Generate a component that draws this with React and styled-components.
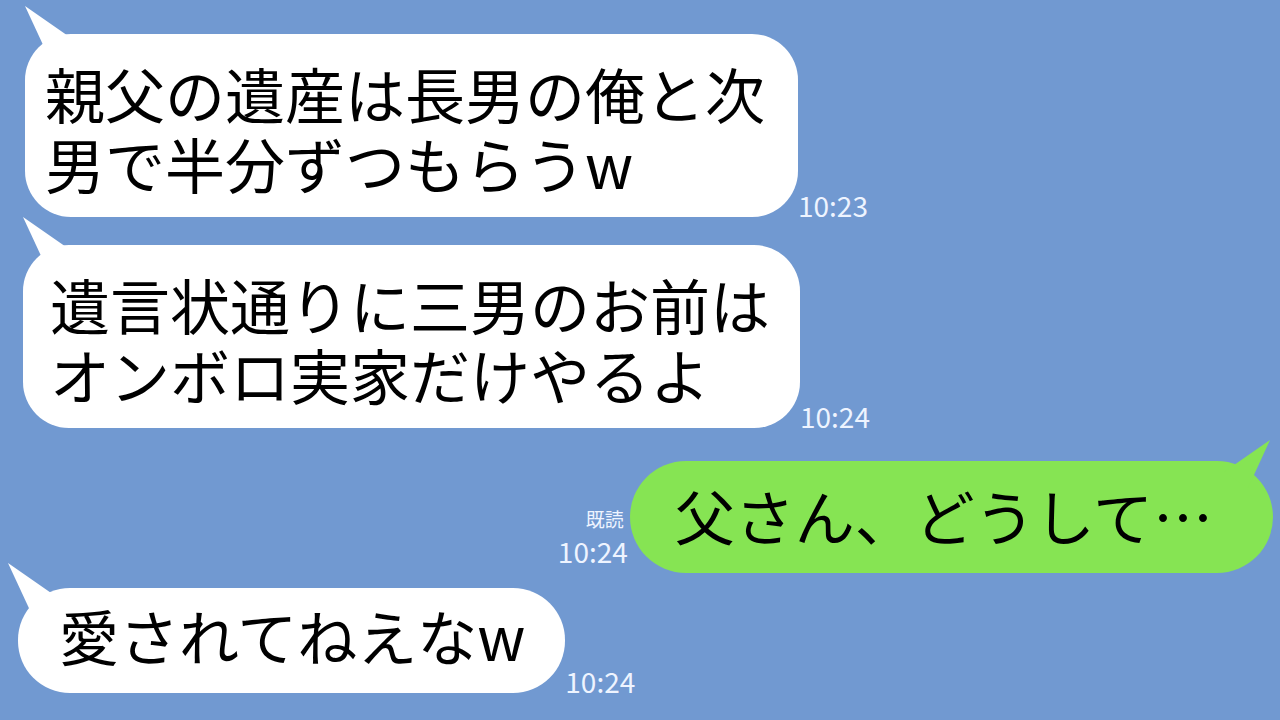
import styled, { createGlobalStyle, css } from "styled-components";

const GlobalStyle = createGlobalStyle`
  html, body {
    margin: 0;
    padding: 0;
    background: #7199d1;
  }
  * {
    box-sizing: border-box;
  }
`

const Screen = styled.div`
  width: 1280px;
  height: 720px;
  overflow: hidden;
  background: #7199d1;
  padding-top: 34px;
  display: flex;
  flex-direction: column;
  font-family: "Noto Sans CJK JP", "Noto Sans", sans-serif;
`

const Row = styled.div`
  display: flex;
  align-items: flex-end;
  margin-top: ${(p) => p.$top || 0}px;
  padding-left: ${(p) => p.$left || 0}px;
  justify-content: ${(p) => (p.$mine ? "flex-end" : "flex-start")};
  padding-right: ${(p) => (p.$mine ? 7 : 0)}px;
`

const Bubble = styled.div`
  position: relative;
  background: ${(p) => (p.$mine ? "#86e453" : "#ffffff")};
  color: #000;
  font-size: 60px;
  line-height: 70px;
  white-space: nowrap;
  border-radius: ${(p) => p.$radius || 46}px;
  padding: ${(p) => p.$pad};

  &::before {
    content: "";
    position: absolute;
    background: inherit;
    ${(p) =>
      p.$mine
        ? css`
            right: 3px;
            top: -21px;
            width: 46px;
            height: 48px;
            clip-path: polygon(46px 0, 0 32px, 24px 48px);
          `
        : css`
            left: ${p.$tailX}px;
            top: ${p.$tailY}px;
            width: 46px;
            height: 56px;
            clip-path: polygon(0 0, 46px 32px, 26px 56px);
          `}
  }
`

const Time = styled.div`
  color: #eef4ff;
  font-size: 28px;
  line-height: 1;
  margin-bottom: -2px;
`

const Meta = styled.div`
  display: flex;
  flex-direction: column;
  align-items: flex-end;
  margin-right: 2px;
  margin-bottom: 8px;
  color: #eef4ff;
`

const Read = styled.div`
  font-size: 19px;
  line-height: 1;
  margin-bottom: 9px;
  margin-right: 4px;
`

const MetaTime = styled.div`
  font-size: 28px;
  line-height: 1;
`

const App = () => {
  return (
    <>
      <GlobalStyle />
      <Screen>
        <Row $left={25}>
          <Bubble $pad="24px 33px 19px 20px" $tailX={0} $tailY={-28}>
            親父の遺産は長男の俺と次
            <br />
            男で半分ずつもらうw
          </Bubble>
          <Time>10:23</Time>
        </Row>
        <Row $left={23} $top={28}>
          <Bubble $pad="24px 30px 19px 27px" $tailX={0} $tailY={-28}>
            遺言状通りに三男のお前は
            <br />
            オンボロ実家だけやるよ
          </Bubble>
          <Time>10:24</Time>
        </Row>
        <Row $mine $top={33}>
          <Meta>
            <Read>既読</Read>
            <MetaTime>10:24</MetaTime>
          </Meta>
          <Bubble $mine $radius={56} $pad="19px 60px 23px 45px">
            父さん、どうして…
          </Bubble>
        </Row>
        <Row $left={18} $top={15}>
          <Bubble $radius={52} $pad="12px 40px 23px 41px" $tailX={-10} $tailY={-25}>
            愛されてねえなw
          </Bubble>
          <Time>10:24</Time>
        </Row>
      </Screen>
    </>
  )
}

export default App;
